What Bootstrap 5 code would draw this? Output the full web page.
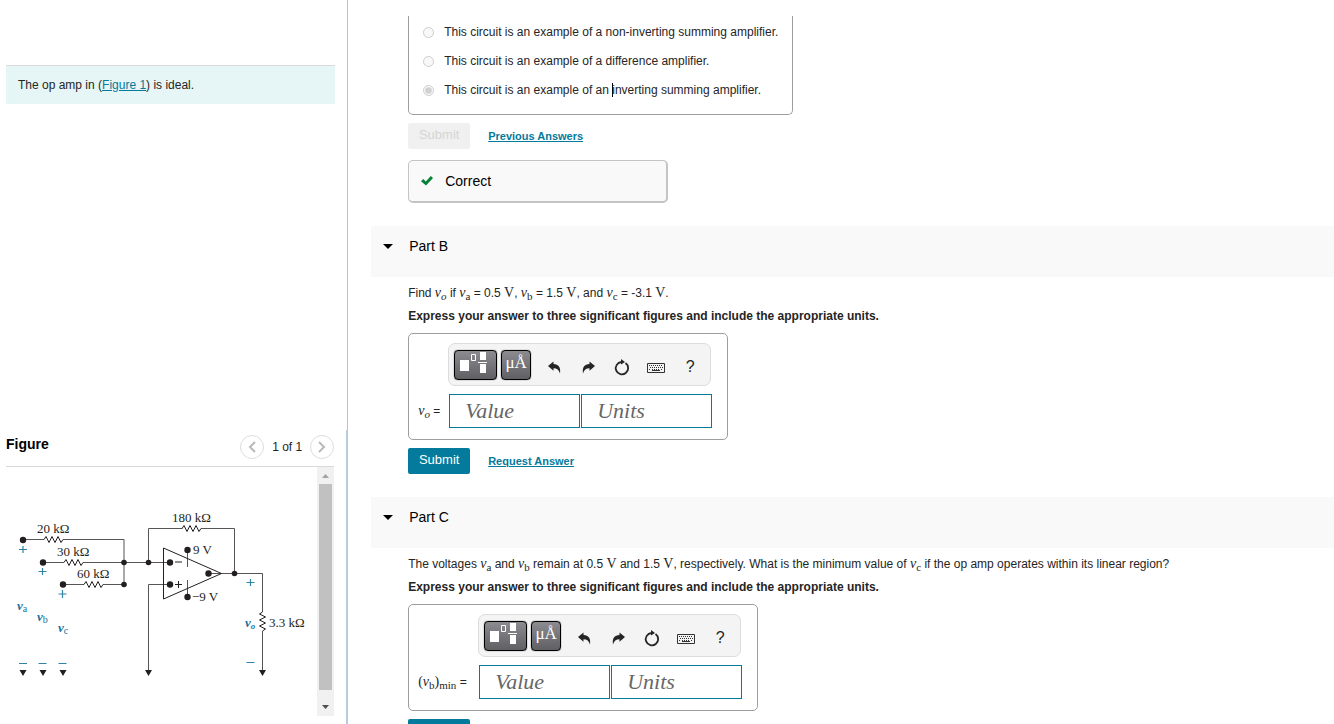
<!DOCTYPE html>
<html lang="en">
<head>
<meta charset="utf-8">
<meta name="viewport" content="width=device-width, initial-scale=1">
<title>Op amp problem</title>
<link href="https://cdn.jsdelivr.net/npm/bootstrap@5.3.0/dist/css/bootstrap.min.css" rel="stylesheet">
<style>
  body { font: 12px/24px "Liberation Sans", Arial, sans-serif; color: #252525; background: #fff; }
  a { color: #047a9c; }
  .side { flex: 0 0 26.1%; min-width: 300px; }
  .side-top { padding: 65px 12px 0 6px; border-right: 1px solid #bcc4d4; }
  .intro { background: #e6f5f5; border-top: 1px solid #d9dcdc; padding: 7px 12px; }
  .side-figure { padding: 0 12px 8px 6px; border-right: 2px solid #b8cadd; }
  .figure-head { padding: 5px 0 7px; border-bottom: 1px solid #d9d9d9; }
  .figure-head h2 { font-size: 14px; line-height: 18px; font-weight: 700; color: #000; }
  .pager { width: 24px; height: 24px; border: 1px solid #ddd; border-radius: 50%; background: #fff; padding: 0; display: grid; place-items: center; }
  .pager-text { margin: 0 8px; line-height: 24px; }
  .figure-view { height: 249px; }
  .bar { width: 17px; background: #f1f1f1; }
  .bar-thumb { background: #c1c1c1; margin: 0 2px; }
  .bar-end { height: 17px; display: grid; place-items: center; }
  .bar-foot { height: 26px; padding-top: 8px; }
  .work { padding: 16px 0 0 23px; scrollbar-width: none; }
  .work::-webkit-scrollbar { display: none; }
  .answer { padding-left: 37px; }
  .choices { width: 385px; max-width: 96%; border: 1px solid #9e9e9e; border-top: 0; border-radius: 0 0 5px 5px; padding: 2px 4px 9px 14px; }
  .choice { line-height: 29px; }
  .choice input { width: 11px; height: 11px; margin: 0 10px 0 0; }
  .caret-bar { display: inline-block; width: 1px; height: 14px; margin-right: -1px; background: #000; vertical-align: -3px; }
  .send { width: 62px; height: 26px; border: 0; border-radius: 2px; background: #047a9c; color: #fff; font-size: 13px; line-height: 24px; padding: 0 0 2px; }
  .send:disabled { background: #f0f0f0; color: #d5d5d5; }
  .actions { margin-top: 8px; gap: 18px; }
  .actions a { font-size: 11px; font-weight: 700; }
  .verdict { width: 260px; height: 43px; margin: 11px 0 23px; padding: 0 12px; border: 1px solid #c4c4c4; border-width: 1px 2px 2px 1px; border-radius: 5px; background: #f9f9f9; font-size: 14px; color: #000; gap: 12px; }
  .part-head { background: #f9f9f9; height: 51px; padding: 8px 12px; margin-bottom: 5px; }
  .part-head h2 { font-size: 14px; line-height: 24px; color: #111; }
  .part-head button { border: 0; background: none; padding: 0; gap: 16px; }
  .ask { line-height: 23px; margin: 0; }
  .m { font-family: "Liberation Serif", "Times New Roman", serif; font-size: 14px; line-height: 1; }
  .m sub { font-size: 11px; bottom: -3px; line-height: 0; }
  .entry { display: grid; width: fit-content; margin-top: 5px; padding: 9px 15px 11px 9px; border: 1px solid #9e9e9e; border-radius: 5px; grid-template-columns: 30px 264px; row-gap: 8px; }
  .entry-wide { grid-template-columns: 60px 264px; }
  .entry > label { line-height: 34px; white-space: nowrap; }
  .tools { grid-column: 2; width: 263px; height: 43px; padding: 0 0 0 5px; background: #f4f4f4; border: 1px solid #dcdcdc; border-radius: 7px; }
  .tools button { border: 0; background: none; padding: 5px 0 0; width: 34px; height: 40px; display: grid; place-items: center; color: #252525; }
  .tools .dark { height: 30px; padding: 0; border: 1px solid #000; border-radius: 4px; background: linear-gradient(#8b8b90, #606064); color: #fff; box-shadow: 0 0 1px #000; }
  .tools .dark-a { width: 43px; margin-right: 4px; padding: 1px 5px; place-items: start; }
  .tools .dark-b { width: 30px; margin-right: 6px; padding-bottom: 3px; font: 17px/24px "Liberation Serif", serif; }
  .tools .ask-key { font-size: 16px; }
  .fields { padding-left: 1px; gap: 1px; }
  .fields input { flex: 1 1 0; min-width: 0; height: 34px; border: 1px solid #047a9c; border-radius: 0; padding: 0 15px; font: italic 22px/32px "Liberation Serif", serif; }
  .fields input::placeholder { color: #666; opacity: 1; }
  .part-next { margin-top: 23px; }
</style>
</head>
<body>
<div class="d-flex vh-100 overflow-hidden">
  <aside class="side d-flex flex-column">
    <section class="side-top flex-grow-1">
      <div class="intro">The op amp in (<a href="#figure">Figure 1</a>) is ideal.</div>
    </section>
    <section class="side-figure" id="figure">
      <div class="figure-head d-flex">
        <h2 class="mb-0 me-auto">Figure</h2>
        <button class="pager" type="button" aria-label="Previous figure"><svg width="8" height="12" viewBox="0 0 8 12" fill="none" stroke="#b9b9b9" stroke-width="2"><path d="M7 1 2 6l5 5"/></svg></button>
        <span class="pager-text">1 of 1</span>
        <button class="pager" type="button" aria-label="Next figure"><svg width="8" height="12" viewBox="0 0 8 12" fill="none" stroke="#b9b9b9" stroke-width="2"><path d="m1 1 5 5-5 5"/></svg></button>
      </div>
      <div class="figure-view d-flex">
        <div class="flex-grow-1 overflow-hidden">
          <svg class="d-block" width="311" height="249" viewBox="6 467 311 249" font-family="Liberation Serif, serif" font-size="13" fill="#231f20">
            <g fill="none" stroke="#555" stroke-width="1">
              <path d="M23 539.500h40M63 539.500h61v45M43 562.500h21M83 562.500h87M63 584.500h21M103 584.500h21"/>
              <path d="M148.500 562v-33.500h34M201 528.500h33.500v45M170 584.500h-21.500V671M187.500 550v17M187.500 580v17M208 573.500h54.500V612M262.500 631v40"/>
              <path stroke="#fff" stroke-width="2" d="M44 539.500h19"/>
            </g>
            <g fill="none" stroke="#231f20">
              <path d="m44 539.500 2-3 3 6 3-6 3 6 3-6 3 6 2-3M64 562.500l2-3 3 6 3-6 3 6 3-6 3 6 2-3M84 584.500l2-3 3 6 3-6 3 6 3-6 3 6 2-3M182 528.500l2-3 3 6 3-6 3 6 3-6 3 6 2-3M262.500 612l-3 2 6 3-6 3 6 3-6 3 6 3-3 2"/>
              <path d="M163.500 548v51l58-25.500z"/>
              <path d="M175 562h7M175 584.500h7M178.500 581v7"/>
            </g>
            <g><circle cx="23" cy="540" r="3.200"/><circle cx="43" cy="562.500" r="3.200"/><circle cx="63" cy="584.500" r="3.200"/><circle cx="124" cy="562.500" r="2.800"/><circle cx="124" cy="584.500" r="2.800"/><circle cx="148.500" cy="562.500" r="2.800"/><circle cx="170" cy="562.500" r="3.200"/><circle cx="170" cy="584.500" r="3.200"/><circle cx="187.500" cy="550" r="3.200"/><circle cx="187.500" cy="597" r="3.200"/><circle cx="208.500" cy="573.500" r="3.200"/><circle cx="234.500" cy="573.500" r="2.800"/></g>
            <path d="M19.500 670h7l-3.500 6zM39.500 670h7l-3.500 6zM59.500 670h7l-3.500 6zM145 670h7l-3.500 6zM259 670h7l-3.500 6z"/>
            <path stroke="#2f83a6" stroke-width="1.200" fill="none" d="M19 549.500h8M23 546v7M38.500 571.500h8M42.500 568v7M58.500 594h8M62.500 590v8M246.500 582.500h8M250.500 579v7M19 663.500h8M38.500 663.500h8M58.500 663.500h8M246.500 662.500h8"/>
            <text x="37" y="533">20 kΩ</text><text x="57" y="556">30 kΩ</text><text x="77" y="578">60 kΩ</text>
            <text x="172" y="522">180 kΩ</text><text x="193" y="554">9 V</text><text x="192" y="601">−9 V</text><text x="269" y="627">3.3 kΩ</text>
            <g fill="#1b7399" font-weight="bold" font-style="italic">
              <text x="17" y="610">v<tspan font-size="10" dy="2" font-style="normal" font-weight="normal">a</tspan></text>
              <text x="37" y="621">v<tspan font-size="10" dy="2" font-style="normal" font-weight="normal">b</tspan></text>
              <text x="58" y="632">v<tspan font-size="10" dy="2" font-style="normal" font-weight="normal">c</tspan></text>
              <text x="245" y="627">v<tspan font-size="9" dy="2">o</tspan></text>
            </g>
          </svg>
        </div>
        <div class="bar d-flex flex-column" aria-hidden="true">
          <div class="bar-end"><svg width="7" height="4" viewBox="0 0 7 4" fill="#a3a3a3"><path d="M0 4h7L3.500 0z"/></svg></div>
          <div class="bar-thumb flex-grow-1"></div>
          <div class="bar-end bar-foot"><svg width="7" height="4" viewBox="0 0 7 4" fill="#505050"><path d="M0 0h7L3.500 4z"/></svg></div>
        </div>
      </div>
    </section>
  </aside>

  <main class="work flex-grow-1 overflow-auto">
    <section class="answer">
      <fieldset class="choices">
        <div class="choice d-flex align-items-center"><input type="radio" name="kind" id="k1" disabled><label for="k1">This circuit is an example of a non-inverting summing amplifier.</label></div>
        <div class="choice d-flex align-items-center"><input type="radio" name="kind" id="k2" disabled><label for="k2">This circuit is an example of a difference amplifier.</label></div>
        <div class="choice d-flex align-items-center"><input type="radio" name="kind" id="k3" checked disabled><label for="k3">This circuit is an example of an <span class="caret-bar"></span>inverting summing amplifier.</label></div>
      </fieldset>
      <div class="actions d-flex align-items-center pt-0 mt-2"><button class="send" type="button" disabled>Submit</button><a href="#previous">Previous Answers</a></div>
      <div class="verdict d-flex align-items-center">
        <svg width="12" height="10" viewBox="0 0 12 10" fill="#038238"><path d="M0 5.200 2.200 3l2.600 2.400L9.800 0 12 2 5 9.600z"/></svg>
        <span>Correct</span>
      </div>
    </section>

    <section>
      <div class="part-head">
        <h2 class="mb-0"><button type="button" class="d-flex align-items-center" aria-expanded="true"><svg width="10" height="5" viewBox="0 0 10 5"><path d="M0 0h10L5 5z"/></svg>Part B</button></h2>
      </div>
      <div class="answer">
        <p class="ask">Find <span class="m"><i>v</i><sub><i>o</i></sub></span> if <span class="m"><i>v</i><sub>a</sub></span> = 0.5 <span class="m">V</span>, <span class="m"><i>v</i><sub>b</sub></span> = 1.5 <span class="m">V</span>, and <span class="m"><i>v</i><sub>c</sub></span> = -3.1 <span class="m">V</span>.</p>
        <p class="ask fw-bold">Express your answer to three significant figures and include the appropriate units.</p>
        <div class="entry">
          <div class="tools d-flex align-items-center">
            <button class="dark dark-a" type="button" aria-label="Templates"><svg width="28" height="24" viewBox="0 0 28 24"><path fill="#fff" d="M0 8h9v11H0zM20 0h6v8h-6zM20 12h6v9h-6zM18 10h9v1h-9z"/><path fill="none" stroke="#fff" d="M11.500 2.500h4v6h-4z"/></svg></button>
            <button class="dark dark-b" type="button">μÅ</button>
            <button type="button" aria-label="Undo"><svg width="13" height="13" viewBox="0 0 13 13" fill="currentColor"><path d="M0 5 5.500.5V3c5 0 7.500 3.500 6.500 9.500C11 9 9 7.200 5.500 7.200v2.600z"/></svg></button>
            <button type="button" aria-label="Redo"><svg width="13" height="13" viewBox="0 0 13 13" fill="currentColor"><path d="M13 5 7.500.5V3C2.500 3 0 6.500 1 12.500 2 9 4 7.200 7.500 7.200v2.600z"/></svg></button>
            <button type="button" aria-label="Reset"><svg width="16" height="17" viewBox="0 0 16 17" fill="none" stroke="currentColor" stroke-width="1.800"><path d="M11.500 4.100A6.200 6.200 0 1 1 7.500 3"/><path fill="currentColor" stroke="none" d="M7 0v5.500L11 3z"/></svg></button>
            <button type="button" aria-label="Keyboard"><svg width="18" height="16" viewBox="0 0 18 16" fill="none" stroke="#333"><path d="M.5 4.500h17v9H.5z"/><path stroke-dasharray="1 1" d="M2 6.500h14M3 8.500h13M2 10.500h2M5 10.500h8M14 10.500h2"/><path d="M5 11.500h8"/></svg></button>
            <button class="ask-key" type="button">?</button>
          </div>
          <label for="bv"><span class="m"><i>v</i><sub><i>o</i></sub></span> =</label>
          <div class="fields d-flex"><input id="bv" type="text" placeholder="Value"><input type="text" placeholder="Units" aria-label="Units"></div>
        </div>
        <div class="actions d-flex align-items-center"><button class="send" type="button">Submit</button><a href="#request">Request Answer</a></div>
      </div>
    </section>

    <section class="part-next">
      <div class="part-head">
        <h2 class="mb-0"><button type="button" class="d-flex align-items-center" aria-expanded="true"><svg width="10" height="5" viewBox="0 0 10 5"><path d="M0 0h10L5 5z"/></svg>Part C</button></h2>
      </div>
      <div class="answer">
        <p class="ask">The voltages <span class="m"><i>v</i><sub>a</sub></span> and <span class="m"><i>v</i><sub>b</sub></span> remain at 0.5 <span class="m">V</span> and 1.5 <span class="m">V</span>, respectively. What is the minimum value of <span class="m"><i>v</i><sub>c</sub></span> if the op amp operates within its linear region?</p>
        <p class="ask fw-bold">Express your answer to three significant figures and include the appropriate units.</p>
        <div class="entry entry-wide">
          <div class="tools d-flex align-items-center">
            <button class="dark dark-a" type="button" aria-label="Templates"><svg width="28" height="24" viewBox="0 0 28 24"><path fill="#fff" d="M0 8h9v11H0zM20 0h6v8h-6zM20 12h6v9h-6zM18 10h9v1h-9z"/><path fill="none" stroke="#fff" d="M11.500 2.500h4v6h-4z"/></svg></button>
            <button class="dark dark-b" type="button">μÅ</button>
            <button type="button" aria-label="Undo"><svg width="13" height="13" viewBox="0 0 13 13" fill="currentColor"><path d="M0 5 5.500.5V3c5 0 7.500 3.500 6.500 9.500C11 9 9 7.200 5.500 7.200v2.600z"/></svg></button>
            <button type="button" aria-label="Redo"><svg width="13" height="13" viewBox="0 0 13 13" fill="currentColor"><path d="M13 5 7.500.5V3C2.500 3 0 6.500 1 12.500 2 9 4 7.200 7.500 7.200v2.600z"/></svg></button>
            <button type="button" aria-label="Reset"><svg width="16" height="17" viewBox="0 0 16 17" fill="none" stroke="currentColor" stroke-width="1.800"><path d="M11.500 4.100A6.200 6.200 0 1 1 7.500 3"/><path fill="currentColor" stroke="none" d="M7 0v5.500L11 3z"/></svg></button>
            <button type="button" aria-label="Keyboard"><svg width="18" height="16" viewBox="0 0 18 16" fill="none" stroke="#333"><path d="M.5 4.500h17v9H.5z"/><path stroke-dasharray="1 1" d="M2 6.500h14M3 8.500h13M2 10.500h2M5 10.500h8M14 10.500h2"/><path d="M5 11.500h8"/></svg></button>
            <button class="ask-key" type="button">?</button>
          </div>
          <label for="cv"><span class="m">(<i>v</i><sub>b</sub>)<sub>min</sub></span> =</label>
          <div class="fields d-flex"><input id="cv" type="text" placeholder="Value"><input type="text" placeholder="Units" aria-label="Units"></div>
        </div>
        <div class="actions d-flex align-items-center"><button class="send" type="button">Submit</button><a href="#request-c">Request Answer</a></div>
      </div>
    </section>
  </main>
</div>
<script src="https://cdn.jsdelivr.net/npm/bootstrap@5.3.0/dist/js/bootstrap.bundle.min.js"></script>
</body>
</html>
